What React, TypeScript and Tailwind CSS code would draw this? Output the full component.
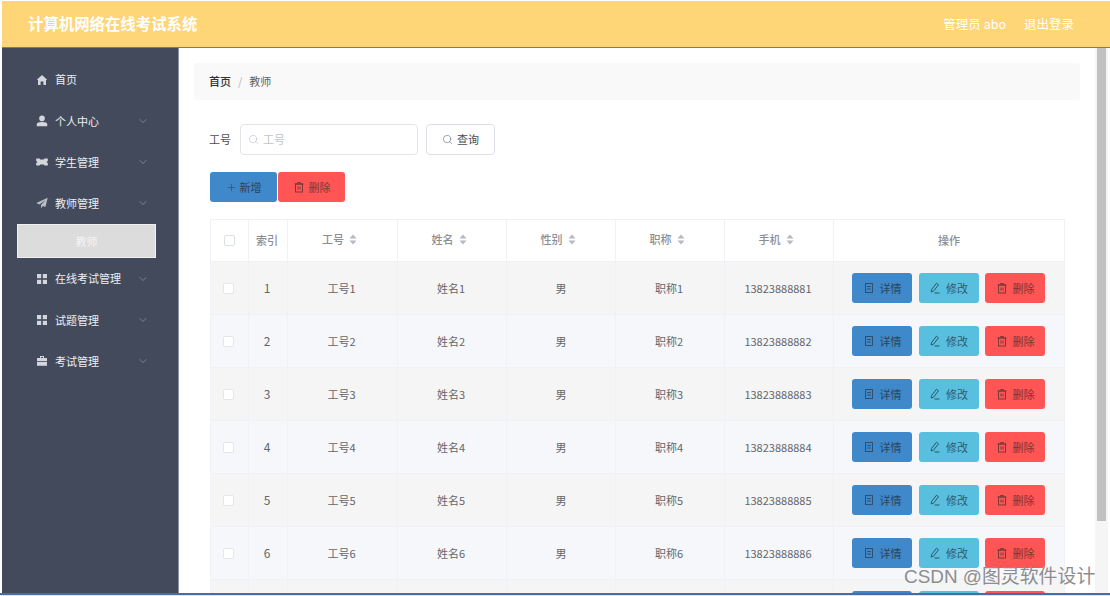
import { Plus, Search, ChevronDown } from "lucide-react";

const font = { fontFamily: '"Noto Sans CJK SC", "Noto Sans", sans-serif' };

const HomeIcon = () => (
  <svg viewBox="0 0 12 12" className="w-3 h-3" fill="#d3d6dc">
    <path d="M6 1 .8 5.8 2 6v5h2.6V7.6h2.8V11H10V6l1.2-.2z" />
  </svg>
);
const UserIcon = () => (
  <svg viewBox="0 0 12 12" className="w-3 h-3" fill="#d3d6dc">
    <circle cx="6" cy="3.4" r="2.8" />
    <path d="M.8 11.2V9.2C.8 7.8 2.4 7 6 7s5.2.8 5.2 2.2v2z" />
  </svg>
);
const TicketIcon = () => (
  <svg viewBox="0 0 12 12" className="w-3 h-3" fill="#d3d6dc">
    <path d="M.2 2.5h3.4l.5 1h3.8l.5-1h3.4v2.4L10.4 6l1.4 1.1v2.4H8.4l-.5-1H4.1l-.5 1H.2V7.1L1.6 6 .2 4.9z" />
  </svg>
);
const SendIcon = () => (
  <svg viewBox="0 0 12 12" className="w-3 h-3" fill="#b9bdc6">
    <path d="M11.7.8.3 6l3.1 1.4L9.6 3 5 8v3.2l1.9-2.3 2.5 1.2z" />
  </svg>
);
const GridIcon = () => (
  <svg viewBox="0 0 12 12" className="w-3 h-3" fill="#d3d6dc">
    <rect x="1" y="1" width="4.2" height="4.2" />
    <rect x="6.8" y="1" width="4.2" height="4.2" />
    <rect x="1" y="6.8" width="4.2" height="4.2" />
    <rect x="6.8" y="6.8" width="4.2" height="4.2" />
  </svg>
);
const CaseIcon = () => (
  <svg viewBox="0 0 12 12" className="w-3 h-3" fill="#d3d6dc">
    <path d="M4 1h4v2h3v3H1V3h3zM5 2v1h2V2z" />
    <rect x="1" y="6.8" width="10" height="4" />
  </svg>
);

const DocIcon = () => (
  <svg viewBox="0 0 12 12" className="w-3 h-3" fill="none" stroke="#2f4f6f" strokeWidth="1">
    <rect x="2.5" y="1.5" width="7" height="9" />
    <path d="M4.2 4.5h3.6M4.2 7h3.6" />
  </svg>
);
const EditIcon = () => (
  <svg viewBox="0 0 12 12" className="w-3 h-3" fill="none" stroke="#2f5566" strokeWidth="1">
    <path d="M7.5 1.2 9.5 2.8 4.5 9.2 2.2 10l.4-2.5zM5.5 11h5" />
  </svg>
);
const TrashIcon = () => (
  <svg viewBox="0 0 12 12" className="w-3 h-3" fill="none" stroke="#7a3a3a" strokeWidth="1">
    <path d="M1.5 3h9M4.5 3V1.5h3V3" />
    <rect x="2.5" y="3" width="7" height="8" />
    <path d="M5 5.5v3M7 5.5v3" />
  </svg>
);

const SortIcon = () => (
  <svg viewBox="0 0 8 11" className="w-2 h-[11px] ml-[5px]" fill="#b4b9c2">
    <path d="M4 .5 7.5 4.5h-7zM4 10.5.5 6.5h7z" />
  </svg>
);

const menuTop = [
  { label: "首页", icon: <HomeIcon />, arrow: false },
  { label: "个人中心", icon: <UserIcon />, arrow: true },
  { label: "学生管理", icon: <TicketIcon />, arrow: true },
  { label: "教师管理", icon: <SendIcon />, arrow: true },
];
const menuBottom = [
  { label: "在线考试管理", icon: <GridIcon /> },
  { label: "试题管理", icon: <GridIcon /> },
  { label: "考试管理", icon: <CaseIcon /> },
];

const MenuRow = ({ label, icon, arrow = true }: { label: string; icon: React.ReactNode; arrow?: boolean }) => (
  <div className="h-[41.25px] flex items-center pl-[34px] pr-[29px] text-[11px] text-[#eceef2]">
    <span className="w-[12px] mr-[7px] flex">{icon}</span>
    <span className="flex-1">{label}</span>
    {arrow && <ChevronDown size={12} strokeWidth={1} color="#b4b8c2" />}
  </div>
);

const ActionButton = ({ bg, color, icon, text }: { bg: string; color: string; icon: React.ReactNode; text: string }) => (
  <button className={`w-[60px] h-[30px] rounded-[3px] flex items-center justify-center gap-[5px] text-[11px] ${bg} ${color}`}>
    {icon}
    {text}
  </button>
);

const headers = ["工号", "姓名", "性别", "职称", "手机"];
const rows = [1, 2, 3, 4, 5, 6, 7];

export default function App() {
  return (
    <div className="relative w-[1110px] h-[596px] overflow-hidden bg-white pl-[2px] pt-[1px] flex flex-col" style={font}>
      <header className="h-[47px] shrink-0 bg-[#fed577] border-b border-[#7d7a70] flex items-center justify-between pl-[26px] pr-[36px] text-white">
        <div className="text-[15.4px] font-bold">计算机网络在线考试系统</div>
        <div className="flex gap-[18px] text-[12.5px]">
          <span>管理员 abo</span>
          <span>退出登录</span>
        </div>
      </header>

      <div className="flex-1 flex min-h-0">
        <aside className="w-[177px] shrink-0 bg-[#434a5c] border-r border-[#8b93a3] pt-[11px]">
          {menuTop.map((m) => (
            <MenuRow key={m.label} label={m.label} icon={m.icon} arrow={m.arrow} />
          ))}
          <div className="ml-[15px] w-[139px] h-[34px] bg-[#dcdcdc] border border-[#f0f0f0] flex items-center justify-center text-[11px] text-[#f4f4f4]">
            教师
          </div>
          {menuBottom.map((m) => (
            <MenuRow key={m.label} label={m.label} icon={m.icon} />
          ))}
        </aside>

        <main className="w-[916px] shrink-0 overflow-hidden pl-[15px] pr-[15px] pt-[15px]">
          <div className="w-[886px] h-[37px] rounded-[3px] bg-[#f9f9f9] flex items-center pl-[15px] text-[11px]">
            <span className="text-[#303133] font-medium">首页</span>
            <span className="mx-[7px] text-[#b4b7bd]">/</span>
            <span className="text-[#606266]">教师</span>
          </div>

          <div className="flex items-center mt-[24px] ml-[15px] h-[31px]">
            <span className="text-[11px] text-[#4a4d52] w-[31px]">工号</span>
            <div className="w-[178px] h-[31px] border border-[#e2e4ea] rounded-[4px] flex items-center pl-[7px] gap-[4px] text-[11px] text-[#c0c4cc]">
              <Search size={11} strokeWidth={1.2} color="#b4b9c2" />
              工号
            </div>
            <button className="ml-[8px] w-[69px] h-[31px] border border-[#dcdfe6] rounded-[4px] flex items-center justify-center gap-[4px] text-[11px] text-[#4a4d52]">
              <Search size={11} strokeWidth={1.2} color="#5a5e66" />
              查询
            </button>
          </div>

          <div className="flex gap-[1px] mt-[17px] ml-[16px]">
            <button className="w-[67px] h-[30px] rounded-[3px] bg-[#3f88c9] flex items-center justify-center gap-[3px] text-[11px] text-[#2b4560]">
              <Plus size={11} strokeWidth={1.2} />
              新增
            </button>
            <button className="w-[67px] h-[30px] rounded-[3px] bg-[#ff5555] flex items-center justify-center gap-[4px] text-[11px] text-[#7a3a3a]">
              <TrashIcon />
              删除
            </button>
          </div>

          <table className="table-fixed border-collapse mt-[17px] ml-[16px] w-[854px] text-[11px] text-[#63666c]">
            <colgroup>
              <col className="w-[38px]" />
              <col className="w-[39px]" />
              <col className="w-[110px]" />
              <col className="w-[109px]" />
              <col className="w-[109px]" />
              <col className="w-[109px]" />
              <col className="w-[109px]" />
              <col className="w-[231px]" />
            </colgroup>
            <thead>
              <tr className="h-[42px] text-[#8b8e94]">
                <th className="border border-[#eff1f6] font-medium">
                  <div className="w-[11px] h-[11px] mx-auto border border-[#dcdfe6] rounded-[2px] bg-white" />
                </th>
                <th className="border border-[#eff1f6] font-medium pr-[2px]">索引</th>
                {headers.map((h) => (
                  <th key={h} className="border border-[#eff1f6] font-medium">
                    <div className="flex items-center justify-center -mt-[3px] -ml-[6px]">
                      {h}
                      <SortIcon />
                    </div>
                  </th>
                ))}
                <th className="border border-[#eff1f6] font-medium">操作</th>
              </tr>
            </thead>
            <tbody>
              {rows.map((n) => (
                <tr key={n} className={`h-[53px] ${n % 2 === 1 ? "bg-[#f5f5f5]" : "bg-[#f5f7fb]"}`}>
                  <td className="border border-[#eff1f6]">
                    <div className="w-[11px] h-[11px] ml-[12px] border border-[#e4e6ec] rounded-[2px] bg-white" />
                  </td>
                  <td className="border border-[#eff1f6] text-center text-[12px] pr-[2px]">{n}</td>
                  <td className="border border-[#eff1f6] text-center pr-[2px]">工号{n}</td>
                  <td className="border border-[#eff1f6] text-center pr-[2px]">姓名{n}</td>
                  <td className="border border-[#eff1f6] text-center">男</td>
                  <td className="border border-[#eff1f6] text-center pr-[2px]">职称{n}</td>
                  <td className="border border-[#eff1f6] text-center pr-[2px]">1382388888{n}</td>
                  <td className="border border-[#eff1f6]">
                    <div className="flex gap-[6.5px] pl-[18px]">
                      <ActionButton bg="bg-[#3f88c9]" color="text-[#2b4560]" icon={<DocIcon />} text="详情" />
                      <ActionButton bg="bg-[#58bfdf]" color="text-[#35596a]" icon={<EditIcon />} text="修改" />
                      <ActionButton bg="bg-[#ff5555]" color="text-[#7a3535]" icon={<TrashIcon />} text="删除" />
                    </div>
                  </td>
                </tr>
              ))}
            </tbody>
          </table>
        </main>

        <div className="w-[13px] shrink-0 bg-[#f5f5f5] px-[2px]">
          <div className="h-[473px] bg-[#c1c1c1]" />
        </div>
      </div>

      <div className="h-[3px] shrink-0 -ml-[2px] bg-[#4b6ba6] border-b border-[#dfe5f0]" />

      <div className="absolute left-[904px] top-[565px] text-[18.9px] leading-[24px] text-[#8d8d8d] whitespace-nowrap" style={{ fontFamily: '"Liberation Sans", "Noto Sans CJK SC", sans-serif' }}>
        CSDN @图灵软件设计
      </div>
    </div>
  );
}
